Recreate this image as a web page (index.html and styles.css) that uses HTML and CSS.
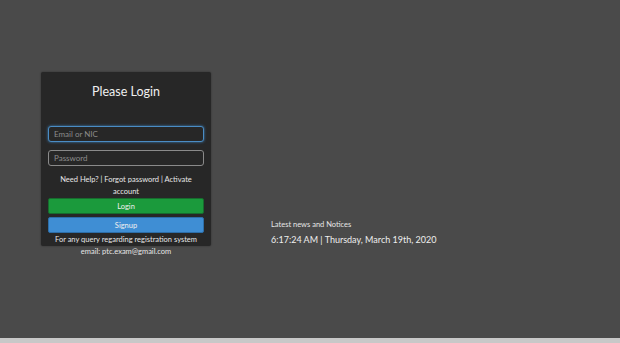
FILE: index.html
```html
<!DOCTYPE html>
<html>
<head>
<meta charset="utf-8">
<link rel="stylesheet" href="styles.css">
</head>
<body>
<div class="page">
  <div class="login-col">
    <div class="panel">
      <h2 class="title">Please Login</h2>
      <input class="field focus" type="text" placeholder="Email or NIC">
      <input class="field" type="password" placeholder="Password">
      <p class="help">Need Help? | Forgot password | Activate account</p>
      <button class="btn green">Login</button>
      <button class="btn blue">Signup</button>
      <p class="query">For any query regarding registration system<br>email: ptc.exam@gmail.com</p>
    </div>
  </div>
  <div class="news">
    <div class="news-title">Latest news and Notices</div>
    <div class="clock">6:17:24 AM | Thursday, March 19th, 2020</div>
  </div>
</div>
<div class="strip"></div>
</body>
</html>
```

FILE: styles.css
```css
html, body {
  margin: 0;
  padding: 0;
}
body {
  background: #4a4a4a;
  font-family: Lato, "Open Sans", sans-serif;
  color: #e6e6e6;
  height: 343px;
  display: flex;
  flex-direction: column;
  overflow: hidden;
}
.page {
  flex: 1;
  display: flex;
  padding: 72px 0 0 41px;
  gap: 60px;
}
.panel {
  width: 170px;
  height: 174px;
  box-sizing: border-box;
  background: #272727;
  border-radius: 2px;
  padding: 0 7px;
  display: flex;
  flex-direction: column;
  box-shadow: 0 0 2px rgba(0,0,0,0.4);
}
.panel > * {
  flex-shrink: 0;
}
.title {
  margin: 11px 0 0;
  font-weight: 400;
  font-size: 12.5px;
  line-height: 18px;
  text-align: center;
  color: #f0f0f0;
}
.field {
  margin: 25px 0 0;
  height: 16px;
  box-sizing: border-box;
  background: #272727;
  border: 1px solid #8a8a8a;
  border-radius: 3px;
  padding: 0 5px;
  font-family: inherit;
  font-size: 8px;
  color: #ddd;
  outline: none;
}
.field + .field {
  margin-top: 8px;
}
.field::placeholder {
  color: #8c8c8c;
}
.field.focus {
  border-color: #4a8cc4;
  box-shadow: 0 0 3px #3d7fb8;
}
.help {
  margin: 8px 4px 0;
  font-size: 7.5px;
  line-height: 12px;
  text-align: center;
  color: #e8e8e8;
}
.btn {
  height: 16px;
  margin-top: 0;
  border: 1px solid #1c4a2a;
  border-radius: 2px;
  font-family: inherit;
  font-size: 7.5px;
  color: #f0f0f0;
  padding: 0;
}
.btn + .btn {
  margin-top: 3px;
}
.green {
  background: #1b9a3c;
  border-color: #176c2e;
}
.blue {
  background: #3f8ed4;
  border-color: #2d6ea8;
}
.query {
  margin: 1px -10px 0;
  font-size: 7.5px;
  line-height: 11.5px;
  text-align: center;
  color: #e6e6e6;
  white-space: nowrap;
}
.news {
  padding-top: 147px;
}
.news-title {
  font-size: 7.5px;
  line-height: 12px;
  color: #e6e6e6;
}
.clock {
  margin-top: 2px;
  font-size: 9px;
  line-height: 14px;
  color: #eeeeee;
}
.strip {
  height: 5px;
  background: #c8c8c8;
}
```
